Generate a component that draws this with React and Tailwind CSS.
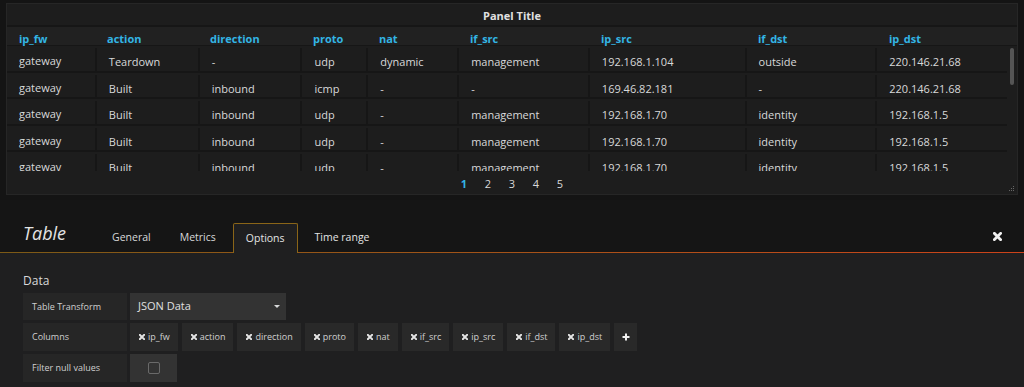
import React from 'react'

const cols = [
  { key: 'ip_fw', w: 88 },
  { key: 'action', w: 103 },
  { key: 'direction', w: 103 },
  { key: 'proto', w: 66 },
  { key: 'nat', w: 91 },
  { key: 'if_src', w: 131 },
  { key: 'ip_src', w: 157 },
  { key: 'if_dst', w: 131 },
  { key: 'ip_dst', w: 132 },
]

const rows = [
  ['gateway', 'Teardown', '-', 'udp', 'dynamic', 'management', '192.168.1.104', 'outside', '220.146.21.68'],
  ['gateway', 'Built', 'inbound', 'icmp', '-', '-', '169.46.82.181', '-', '220.146.21.68'],
  ['gateway', 'Built', 'inbound', 'udp', '-', 'management', '192.168.1.70', 'identity', '192.168.1.5'],
  ['gateway', 'Built', 'inbound', 'udp', '-', 'management', '192.168.1.70', 'identity', '192.168.1.5'],
  ['gateway', 'Built', 'inbound', 'udp', '-', 'management', '192.168.1.70', 'identity', '192.168.1.5'],
]

function XIcon({ size = 7, color = '#e4e4e4', stroke = 2.4 }) {
  return (
    <svg width={size} height={size} viewBox="0 0 10 10">
      <path d="M1.5 1.5 L8.5 8.5 M8.5 1.5 L1.5 8.5" stroke={color} strokeWidth={stroke * 1.4} strokeLinecap="square" />
    </svg>
  )
}

function Chip({ label }) {
  return (
    <div className="h-[28px] bg-[#292929] flex items-center gap-[3px] pl-[9px] pr-[8px] text-[9px] text-[#d0d0d0]">
      <XIcon size={6} />
      <span>{label}</span>
    </div>
  )
}

export default function App() {
  return (
    <div className="w-[1024px] h-[387px] overflow-hidden bg-[#141414] font-['Open_Sans',sans-serif] text-[#d8d9da]">
      {/* panel */}
      <div className="mx-[6px] mt-[3px] h-[192px] border border-[#262626] bg-[#1d1d1d] flex flex-col">
        <div className="h-[23px] pt-[4px] flex items-center justify-center text-[11px] font-bold text-[#e0e0e0] border-b-2 border-[#161616]">
          Panel Title
        </div>
        <div className="h-[19px] pt-[7px] flex bg-[#212121] border-b border-[#161616]">
          {cols.map((c) => (
            <div key={c.key} style={{ width: c.w }} className="pl-[12px] flex items-center text-[11px] font-bold text-[#33b5e5]">
              {c.key}
            </div>
          ))}
        </div>
        <div className="flex h-[125px] overflow-hidden">
          <div className="flex-1 overflow-hidden">
            {rows.map((r, i) => (
              <div key={i} className="h-[26.6px] flex border-b-2 border-[#161616]">
                {r.map((v, j) => (
                  <div
                    key={j}
                    style={{ width: cols[j].w }}
                    className={
                      'pl-[12px] pt-[6px] flex items-center text-[11px] text-[#d8d9da] ' +
                      (j > 0 ? 'border-l-2 border-[#161616] mt-[2px]' : '')
                    }
                  >
                    {v}
                  </div>
                ))}
              </div>
            ))}
          </div>
          <div className="w-[10px] pt-[2px] flex justify-center">
            <div className="w-[4px] h-[37px] rounded-[2px] bg-[#555555]" />
          </div>
        </div>
        <div className="flex-1 relative flex items-center justify-center pt-[4px] text-[11px]">
          {[1, 2, 3, 4, 5].map((n) => (
            <span key={n} className={'w-[24px] text-center ' + (n === 1 ? 'text-[#33b5e5] font-bold' : 'text-[#d8d9da]')}>
              {n}
            </span>
          ))}
          <svg className="absolute right-[2px] bottom-[2px]" width="7" height="7" viewBox="0 0 7 7">
            <rect x="5" y="1" width="1" height="1" fill="#666" />
            <rect x="3" y="3" width="1" height="1" fill="#666" />
            <rect x="5" y="3" width="1" height="1" fill="#666" />
            <rect x="1" y="5" width="1" height="1" fill="#666" />
            <rect x="3" y="5" width="1" height="1" fill="#666" />
            <rect x="5" y="5" width="1" height="1" fill="#666" />
          </svg>
        </div>
      </div>

      {/* editor */}
      <div className="mt-[5px]">
        <div className="h-[52px] bg-[#151515] flex items-end pl-[23px] pr-[22px]">
          <div className="text-[18px] italic text-[#e4e4e4] mb-[5px] mr-[34px]">Table</div>
          <div className="flex gap-[5px] items-end">
            <div className="h-[29px] px-[12px] flex items-center text-[10.5px] text-[#d8d9da]">General</div>
            <div className="h-[29px] px-[12px] flex items-center text-[10.5px] text-[#d8d9da]">Metrics</div>
            <div className="relative z-10 -mb-px h-[30px] px-[12px] flex items-center text-[10.5px] text-[#e4e4e4] bg-[#1f1f20] border border-b-0 border-[#8a6518] rounded-t-[2px]">
              Options
            </div>
            <div className="h-[29px] px-[12px] flex items-center text-[10.5px] text-[#e4e4e4]">Time range</div>
          </div>
          <div className="ml-auto mb-[11px]">
            <XIcon size={9} color="#f0f0f0" stroke={2.2} />
          </div>
        </div>
        <div className="h-px bg-gradient-to-r from-[#7c5a16] to-[#cc421a]" />
        <div className="bg-[#1f1f20] h-[200px] pl-[23px] pt-[21px]">
          <div className="text-[12px] text-[#d8d9da] h-[14px] leading-[14px]">Data</div>
          <div className="mt-[5px] flex flex-col gap-[3px]">
            <div className="flex gap-[3px] h-[27px]">
              <div className="w-[104px] bg-[#262626] flex items-center pl-[9px] text-[9px] text-[#d0d0d0]">Table Transform</div>
              <div className="w-[156px] bg-[#333333] flex items-center pl-[8px] pr-[6px] text-[11px] text-[#e0e0e0]">
                <span>JSON Data</span>
                <svg className="ml-auto" width="6" height="4" viewBox="0 0 6 4">
                  <path d="M0 0 H6 L3 3 Z" fill="#d8d9da" />
                </svg>
              </div>
            </div>
            <div className="flex gap-[4px] h-[28px]">
              <div className="w-[104px] bg-[#262626] flex items-center pl-[9px] text-[9px] text-[#d0d0d0] mr-[-1px]">Columns</div>
              {cols.map((c) => (
                <Chip key={c.key} label={c.key} />
              ))}
              <div className="w-[23px] bg-[#292929] flex items-center justify-center">
                <svg width="8" height="8" viewBox="0 0 8 8">
                  <path d="M4 0.5 V7.5 M0.5 4 H7.5" stroke="#f0f0f0" strokeWidth="2" />
                </svg>
              </div>
            </div>
            <div className="flex gap-[3px] h-[28px]">
              <div className="w-[104px] bg-[#262626] flex items-center pl-[9px] text-[9px] text-[#d0d0d0]">Filter null values</div>
              <div className="w-[47px] bg-[#333333] flex items-center justify-center">
                <div className="w-[12px] h-[12px] border-[1.5px] border-[#6a6a6a] rounded-[2px]" />
              </div>
            </div>
          </div>
        </div>
      </div>
    </div>
  )
}
